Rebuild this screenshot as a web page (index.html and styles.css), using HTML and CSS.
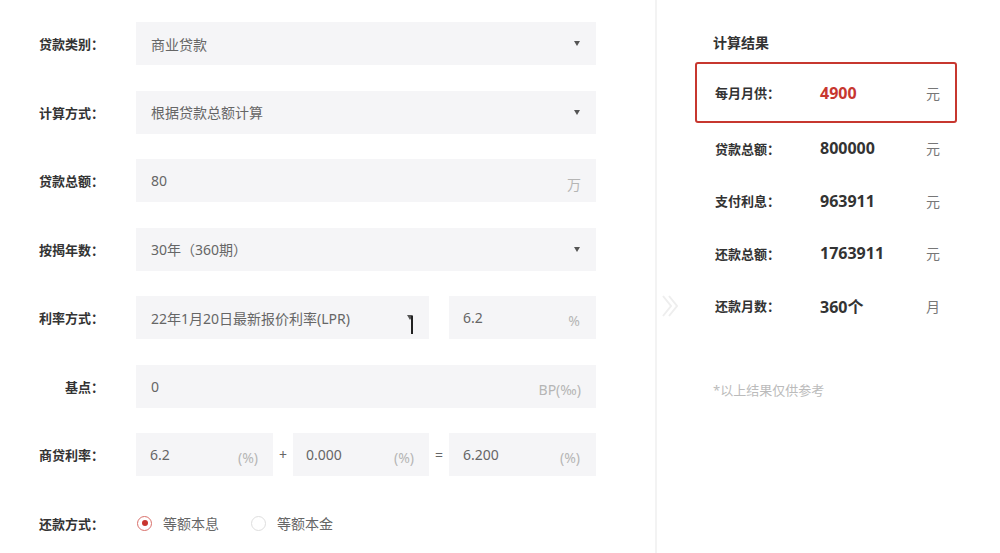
FILE: index.html
```html
<!DOCTYPE html>
<html lang="zh-CN">
<head>
    <meta charset="UTF-8">
    <meta name="viewport" content="width=device-width, initial-scale=1.0">
    <title>房贷计算器</title>
    <link rel="stylesheet" href="styles.css">
</head>
<body>
    <div class="calc">
        <div class="form">
            <div class="row">
                <span class="label">贷款类别：</span>
                <div class="field select wide"><span class="val">商业贷款</span><i class="caret"></i></div>
            </div>
            <div class="row">
                <span class="label">计算方式：</span>
                <div class="field select wide"><span class="val">根据贷款总额计算</span><i class="caret"></i></div>
            </div>
            <div class="row">
                <span class="label">贷款总额：</span>
                <div class="field wide"><span class="val">80</span><span class="unit low">万</span></div>
            </div>
            <div class="row">
                <span class="label">按揭年数：</span>
                <div class="field select wide"><span class="val">30年（360期）</span><i class="caret"></i></div>
            </div>
            <div class="row">
                <span class="label">利率方式：</span>
                <div class="group">
                    <div class="field select lpr">
                        <span class="val">22年1月20日最新报价利率(LPR)</span><i class="caret"></i>
                        <span class="pointer"></span>
                    </div>
                    <div class="field rate"><span class="val">6.2</span><span class="unit low">%</span></div>
                </div>
            </div>
            <div class="row">
                <span class="label">基点：</span>
                <div class="field wide"><span class="val">0</span><span class="unit low">BP(‰)</span></div>
            </div>
            <div class="row">
                <span class="label">商贷利率：</span>
                <div class="group">
                    <div class="field part"><span class="val">6.2</span><span class="unit low">(%)</span></div>
                    <span class="op">+</span>
                    <div class="field part"><span class="val">0.000</span><span class="unit low">(%)</span></div>
                    <span class="op">=</span>
                    <div class="field rate"><span class="val">6.200</span><span class="unit low">(%)</span></div>
                </div>
            </div>
            <div class="row">
                <span class="label">还款方式：</span>
                <div class="radios">
                    <span class="radio checked"><i></i>等额本息</span>
                    <span class="radio"><i></i>等额本金</span>
                </div>
            </div>
        </div>

        <div class="divider">
            <svg class="arrows" width="20" height="26" viewBox="0 0 20 26">
                <polyline points="3,3 11,13 3,23" fill="none" stroke="#eeeeee" stroke-width="2"/>
                <polyline points="9,3 17,13 9,23" fill="none" stroke="#eeeeee" stroke-width="2"/>
            </svg>
        </div>

        <div class="result">
            <h3 class="title">计算结果</h3>
            <div class="res-row main">
                <span class="res-label">每月月供：</span>
                <span class="res-val">4900</span>
                <span class="res-unit">元</span>
            </div>
            <div class="res-row">
                <span class="res-label">贷款总额：</span>
                <span class="res-val">800000</span>
                <span class="res-unit">元</span>
            </div>
            <div class="res-row">
                <span class="res-label">支付利息：</span>
                <span class="res-val">963911</span>
                <span class="res-unit">元</span>
            </div>
            <div class="res-row">
                <span class="res-label">还款总额：</span>
                <span class="res-val">1763911</span>
                <span class="res-unit">元</span>
            </div>
            <div class="res-row">
                <span class="res-label">还款月数：</span>
                <span class="res-val">360个</span>
                <span class="res-unit">月</span>
            </div>
            <p class="note">*以上结果仅供参考</p>
        </div>
    </div>
</body>
</html>
```

FILE: styles.css
```css
body {
    margin: 0;
    background: #fff;
    font-family: "Noto Sans", "Noto Sans CJK SC", sans-serif;
    color: #333;
    overflow: hidden;
}

.calc {
    display: flex;
    height: 553px;
}

/* left form */
.form {
    width: 655px;
    padding-top: 22px;
    display: flex;
    flex-direction: column;
    gap: 25.5px;
}
.row {
    display: flex;
    align-items: center;
    height: 43px;
}
.label {
    width: 66px;
    margin-left: 38px;
    margin-right: 32px;
    text-align: right;
    font-size: 13px;
    font-weight: 700;
    color: #333;
    white-space: nowrap;
}
.field {
    position: relative;
    height: 43px;
    box-sizing: border-box;
    background: #f5f5f7;
    display: flex;
    align-items: center;
    justify-content: space-between;
    padding: 0 15px 0 15px;
    font-size: 14px;
    color: #666;
}
.wide { width: 460px; }
.lpr { width: 293px; }
.rate { width: 147px; padding-left: 14px; padding-right: 16px; }
.part { width: 137px; padding-left: 14px; }
.part + .op + .part { width: 136px; padding-left: 13px; }
.val { white-space: nowrap; }
.unit {
    color: #b5b5b5;
    font-size: 14px;
}
.unit.low { position: relative; top: 3px; }
.caret {
    width: 0;
    height: 0;
    border-left: 3.5px solid transparent;
    border-right: 3.5px solid transparent;
    border-top: 5px solid #555;
    margin-right: 1px;
}
.group {
    display: flex;
    align-items: center;
}
.lpr + .rate { margin-left: 20px; }
.op {
    width: 20px;
    text-align: center;
    font-size: 14px;
    color: #666;
}
.pointer {
    position: absolute;
    left: 275px;
    top: 20px;
    width: 1.5px;
    height: 18px;
    background: #222;
}

/* radio options */
.radios {
    display: flex;
    align-items: center;
    gap: 31px;
    font-size: 14px;
    color: #666;
}
.radio {
    display: flex;
    align-items: center;
    gap: 11px;
    margin-left: 1px;
}
.radio i {
    width: 15px;
    height: 15px;
    box-sizing: border-box;
    border-radius: 50%;
    border: 1px solid #dedede;
    display: flex;
    align-items: center;
    justify-content: center;
}
.radio.checked i {
    border-color: #d9706b;
}
.radio.checked i::after {
    content: "";
    width: 6px;
    height: 6px;
    border-radius: 50%;
    background: #c8352e;
}

/* separator between form and result */
.divider {
    position: relative;
    width: 2px;
    background: #f3f3f3;
}
.arrows {
    position: absolute;
    left: 5px;
    top: 293px;
}

/* result panel */
.result {
    flex: 1;
    padding-left: 38px;
    padding-top: 33px;
}
.title {
    margin: 0 0 9px;
    padding-left: 18px;
    font-size: 14px;
    font-weight: 600;
    line-height: 20px;
    color: #333;
}
.res-row {
    width: 262px;
    box-sizing: border-box;
    height: 52.5px;
    padding-left: 20px;
    display: grid;
    grid-template-columns: 105px 106px auto;
    align-items: center;
}
.res-row.main {
    height: 61px;
    padding-left: 18px;
    border: 2px solid #c7372f;
    border-radius: 3px;
    margin-bottom: -1px;
}
.res-label {
    font-size: 13px;
    font-weight: 700;
    color: #333;
    white-space: nowrap;
}
.res-val {
    font-size: 16px;
    font-weight: 700;
    color: #333;
    white-space: nowrap;
}
.main .res-val { color: #c7372f; }
.res-unit {
    font-size: 14px;
    color: #777;
}
.note {
    margin: 48px 0 0;
    padding-left: 18px;
    font-size: 13px;
    color: #bbb;
}
```
